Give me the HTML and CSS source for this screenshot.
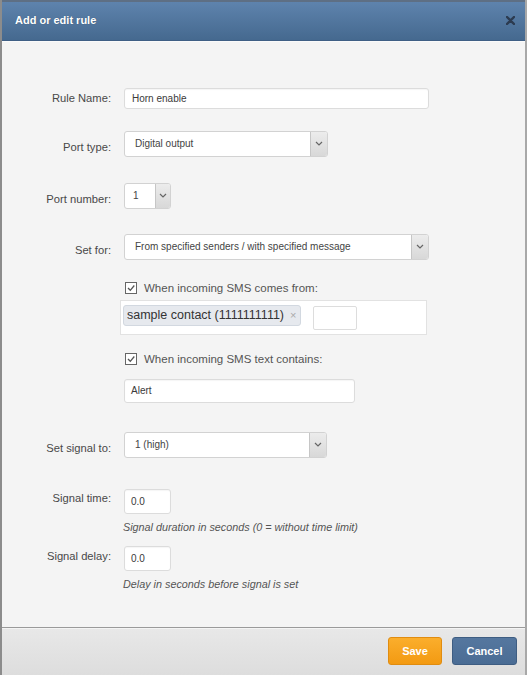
FILE: index.html
```html
<!DOCTYPE html>
<html>
<head>
<meta charset="utf-8">
<title>Add or edit rule</title>
<link rel="stylesheet" href="styles.css">
</head>
<body>
<div class="dialog">
  <div class="header">
    <span class="title">Add or edit rule</span>
    <span class="close"><svg width="9" height="9" viewBox="0 0 9 9"><path d="M1 1L8 8M8 1L1 8" stroke="#2c3b50" stroke-width="2.4" stroke-linecap="round"/></svg></span>
  </div>
  <div class="body">
    <div class="row r-name">
      <label class="label">Rule Name:</label>
      <div class="input w-wide">Horn enable</div>
    </div>
    <div class="row r-port">
      <label class="label lbl-sel">Port type:</label>
      <div class="select w-mid"><span class="val">Digital output</span><span class="arrow"><svg width="8" height="5" viewBox="0 0 8 5"><path d="M1 1L4 4L7 1" fill="none" stroke="#666" stroke-width="1.2"/></svg></span></div>
    </div>
    <div class="row r-num">
      <label class="label lbl-sel">Port number:</label>
      <div class="select w-num"><span class="val">1</span><span class="arrow"><svg width="8" height="5" viewBox="0 0 8 5"><path d="M1 1L4 4L7 1" fill="none" stroke="#666" stroke-width="1.2"/></svg></span></div>
    </div>
    <div class="row r-set">
      <label class="label lbl-sel">Set for:</label>
      <div class="select w-wide"><span class="val">From specified senders / with specified message</span><span class="arrow"><svg width="8" height="5" viewBox="0 0 8 5"><path d="M1 1L4 4L7 1" fill="none" stroke="#666" stroke-width="1.2"/></svg></span></div>
    </div>
    <div class="row r-chk1">
      <span class="label"></span>
      <div class="check"><span class="box"><svg width="10" height="10" viewBox="0 0 10 10"><path d="M2 5L4.3 7.3L8.3 2.5" fill="none" stroke="#555" stroke-width="1.3"/></svg></span>When incoming SMS comes from:</div>
    </div>
    <div class="row r-tags">
      <span class="label"></span>
      <div class="tagbox">
        <span class="tag">sample contact (1111111111)<span class="x">×</span></span>
        <span class="taginput"></span>
      </div>
    </div>
    <div class="row r-chk2">
      <span class="label"></span>
      <div class="check"><span class="box"><svg width="10" height="10" viewBox="0 0 10 10"><path d="M2 5L4.3 7.3L8.3 2.5" fill="none" stroke="#555" stroke-width="1.3"/></svg></span>When incoming SMS text contains:</div>
    </div>
    <div class="row r-alert">
      <span class="label"></span>
      <div class="input w-alert tall">Alert</div>
    </div>
    <div class="row r-signal">
      <label class="label lbl-sel">Set signal to:</label>
      <div class="select w-sig"><span class="val">1 (high)</span><span class="arrow"><svg width="8" height="5" viewBox="0 0 8 5"><path d="M1 1L4 4L7 1" fill="none" stroke="#666" stroke-width="1.2"/></svg></span></div>
    </div>
    <div class="row r-time">
      <label class="label lbl-num">Signal time:</label>
      <div class="input w-small num">0.0</div>
    </div>
    <div class="row r-hint1">
      <span class="label"></span>
      <div class="hint">Signal duration in seconds (0 = without time limit)</div>
    </div>
    <div class="row r-delay">
      <label class="label lbl-num2">Signal delay:</label>
      <div class="input w-small num">0.0</div>
    </div>
    <div class="row r-hint2">
      <span class="label"></span>
      <div class="hint">Delay in seconds before signal is set</div>
    </div>
  </div>
  <div class="footer">
    <button class="btn save">Save</button>
    <button class="btn cancel">Cancel</button>
  </div>
</div>
</body>
</html>
```

FILE: styles.css
```css
* { box-sizing: border-box; }
html, body { margin: 0; padding: 0; }
body {
  width: 527px;
  height: 675px;
  font-family: "Liberation Sans", Arial, sans-serif;
  background: #f4f4f4;
}
.dialog {
  width: 527px;
  height: 675px;
  display: flex;
  flex-direction: column;
  border-left: 2px solid #8c8c8c;
  border-right: 2px solid #a8a8a8;
}
.header {
  height: 41px;
  flex: none;
  border-top: 2px solid #5e6f84;
  border-bottom: 1px solid #3f5f85;
  background: linear-gradient(#5e83ad, #45698f);
  display: flex;
  align-items: center;
  justify-content: space-between;
  padding: 0 10px 0 13px;
}
.title {
  color: #fff;
  font-weight: bold;
  font-size: 11px;
  text-shadow: 0 0 1px rgba(0,0,0,0.3);
  margin-top: -2px;
}
.close { display: flex; margin-top: -1px; }
.body {
  flex: 1;
  background: #f4f4f4;
  border-top: 1px solid #fafafa;
}
.row { display: flex; align-items: flex-start; }
.label {
  width: 111px;
  flex: none;
  margin-right: 13px;
  text-align: right;
  font-size: 11.2px;
  color: #484848;
  margin-left: -2px;
}
.input {
  background: #fff;
  border: 1px solid #dcdcdc;
  border-radius: 3px;
  font-size: 10px;
  color: #3a3a3a;
  height: 21px;
  line-height: 19px;
  padding: 0 7px;
  box-shadow: inset 0 1px 1px rgba(0,0,0,0.04);
}
.input.tall { height: 24px; line-height: 22px; padding-left: 6px; }
.input.num { height: 25px; line-height: 24px; font-size: 10px; padding-left: 6px; }
.w-wide { width: 305px; }
.w-mid { width: 204px; }
.w-num { width: 47px; }
.w-sig { width: 203px; }
.w-alert { width: 231px; }
.w-small { width: 47px; }

.select {
  display: flex;
  background: #fff;
  border: 1px solid #d2d2d2;
  border-radius: 3px;
  height: 26px;
  font-size: 10px;
  color: #444;
  overflow: hidden;
}
.select .val { flex: 1; padding: 0 10px; line-height: 23px; white-space: nowrap; }
.w-num .val { padding: 0 8px; }
.select .arrow {
  width: 17px;
  flex: none;
  border-left: 1px solid #c6c6c6;
  background: linear-gradient(#ececec, #d8d8d8);
  display: flex;
  align-items: center;
  justify-content: center;
  padding-bottom: 2px;
}
.w-num .arrow { width: 15px; }

.r-name { margin-top: 46px; }
.r-name .label { line-height: 21px; }
.r-port { margin-top: 22px; }
.r-num { margin-top: 26px; }
.r-set { margin-top: 25px; }
.lbl-sel { padding-top: 10px; }
.r-chk1 { margin-top: 21px; }
.check {
  display: flex;
  align-items: center;
  font-size: 11.5px;
  color: #555;
  height: 14px;
}
.check .box {
  width: 12px;
  height: 12px;
  border: 1px solid #666;
  background: #fff;
  margin: 0 7px 0 1px;
  display: flex;
  align-items: center;
  justify-content: center;
}
.r-tags { margin-top: 5px; }
.r-tags .label { margin-right: 9px; }
.tagbox {
  width: 307px;
  height: 35px;
  background: #fff;
  border: 1px solid #e2e2e2;
  display: flex;
  align-items: flex-start;
  padding: 4px 0 0 2px;
}
.tag {
  height: 21px;
  line-height: 19px;
  background: #e6e9ee;
  border: 1px solid #d2d8e0;
  border-radius: 3px;
  font-size: 12.5px;
  color: #333;
  padding: 0 4px 0 3px;
  white-space: nowrap;
}
.tag .x { color: #aaa; font-size: 11px; margin-left: 6px; }
.taginput {
  width: 44px;
  height: 24px;
  margin-left: 12px;
  margin-top: 1px;
  border: 1px solid #ddd;
  border-radius: 2px;
  background: #fff;
}
.r-chk2 { margin-top: 17px; }
.r-alert { margin-top: 13px; }
.r-signal { margin-top: 29px; }
.r-time { margin-top: 31px; }
.lbl-num { padding-top: 3px; }
.r-hint1 { margin-top: 7px; }
.hint {
  font-size: 10.8px;
  font-style: italic;
  color: #555;
  margin-left: -1px;
  line-height: 13px;
}
.r-delay { margin-top: 12px; }
.lbl-num2 { padding-top: 4px; }
.r-hint2 { margin-top: 7px; }

.footer {
  height: 48px;
  flex: none;
  border-top: 1px solid #9a9a9a;
  box-shadow: inset 0 1px 0 #f4f4f4;
  background: linear-gradient(#e8e8e8, #dddddd);
  display: flex;
  justify-content: flex-end;
  align-items: flex-start;
  padding: 9px 8px 0 0;
  gap: 10px;
}
.btn {
  height: 28px;
  border-radius: 3px;
  font-family: "Liberation Sans", Arial, sans-serif;
  font-weight: bold;
  font-size: 11px;
  color: #fff;
  padding: 0;
  cursor: pointer;
}
.save {
  width: 54px;
  background: linear-gradient(#fbae2c, #f39a12);
  border: 1px solid #e08c10;
}
.cancel {
  width: 65px;
  background: linear-gradient(#55779f, #4a6c94);
  border: 1px solid #3e5d82;
}
```
